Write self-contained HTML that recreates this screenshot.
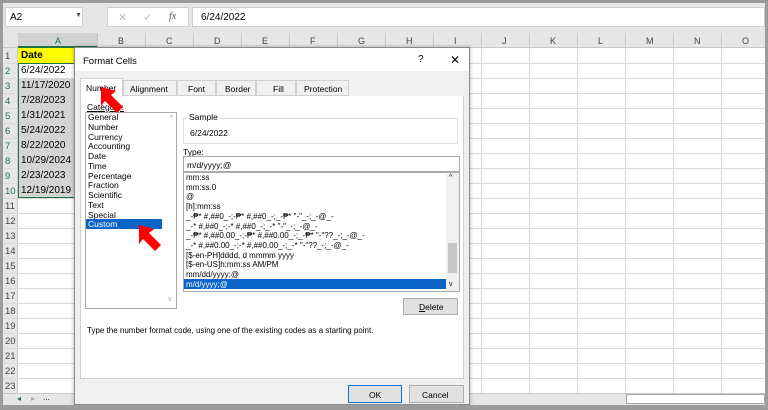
<!DOCTYPE html>
<html><head><style>
*{box-sizing:border-box;margin:0;padding:0}
body{width:768px;height:410px;overflow:hidden;background:#9b9b9b;font-family:"Liberation Sans",sans-serif;position:relative}
.a{position:absolute}
.t{font-size:9px;color:#000;white-space:nowrap}
</style></head><body>
<div class="a" style="left:3px;top:3px;width:762px;height:402px;background:#fff;overflow:hidden">
<div class="a" style="left:0;top:0;width:762px;height:30px;background:#e6e6e6"></div>
<div class="a" style="left:2px;top:4px;width:78px;height:20px;background:#fff;border:1px solid #d0d0d0"></div>
<div class="a t" style="left:7px;top:9px;font-size:10px">A2</div>
<div class="a t" style="left:72px;top:9px;font-size:7px;color:#555">▼</div>
<div class="a" style="left:104px;top:4px;width:82px;height:20px;background:#fff;border:1px solid #d0d0d0"></div>
<div class="a t" style="left:115px;top:8px;font-size:11px;color:#bbb">✕</div>
<div class="a t" style="left:140px;top:8px;font-size:11px;color:#bbb">✓</div>
<div class="a t" style="left:166px;top:8px;font-size:10px;color:#555;font-style:italic;font-family:'Liberation Serif',serif">fx</div>
<div class="a" style="left:189px;top:4px;width:573px;height:20px;background:#fff;border:1px solid #d0d0d0"></div>
<div class="a t" style="left:198px;top:9px;font-size:10px">6/24/2022</div>
<div class="a" style="left:0;top:30px;width:762px;height:15px;background:#e6e6e6;border-bottom:1px solid #c8c8c8"></div>
<div class="a" style="left:15px;top:30px;width:79px;height:15px;background:#d2d2d2;border-bottom:2px solid #217346"></div>
<div class="a t" style="left:52px;top:33px;color:#217346">A</div>
<div id="cols"></div>
<div class="a" style="left:0;top:45px;width:15px;height:345px;background:#e6e6e6;border-right:1px solid #c8c8c8"></div>
<div id="rows"></div>
<div class="a" style="left:15px;top:45px;width:79px;height:15px;background:#ffff00"></div>
<div class="a t" style="left:18px;top:47px;font-size:10px;font-weight:bold">Date</div>
<div class="a" style="left:15px;top:60px;width:79px;height:135px;background:#d4d4d4;border:1.5px solid #217346"></div>
<div class="a" style="left:16px;top:61px;width:77px;height:14px;background:#fff"></div>
<div id="dates"></div>
<div class="a" style="left:0;top:390px;width:762px;height:12px;background:#e6e6e6;border-top:1px solid #c8c8c8"></div>
<div class="a t" style="left:14px;top:391px;font-size:8px;color:#217346">◂</div>
<div class="a t" style="left:28px;top:391px;font-size:8px;color:#aaa">▸</div>
<div class="a t" style="left:40px;top:390px;font-size:8px">...</div>
<div class="a" style="left:623px;top:391px;width:139px;height:10px;background:#fff;border:1px solid #aaa"></div>
<div class="a" style="left:71px;top:44px;width:396px;height:358px;background:#f0f0f0;border:1px solid #8a8a8a;box-shadow:0 0 4px rgba(0,0,0,.3)">
 <div class="a" style="left:0;top:0;width:394px;height:23px;background:#fff"></div>
 <div class="a t" style="left:8px;top:8px;font-size:9.5px">Format Cells</div>
 <div class="a t" style="left:343px;top:6px;font-size:10px">?</div>
 <div class="a t" style="left:375px;top:5px;font-size:12px">✕</div>
 <div class="a" style="left:5px;top:30px;width:43px;height:19px;background:#fff;border:1px solid #d0d0d0;border-bottom:none"></div>
 <div class="a t" style="left:11px;top:35px;font-size:8.5px">Number</div>
 <div class="a" style="left:48px;top:32px;width:54px;height:16px;border:1px solid #d0d0d0"></div><div class="a t" style="left:55px;top:36px;font-size:8.5px">Alignment</div>
 <div class="a" style="left:102px;top:32px;width:39px;height:16px;border:1px solid #d0d0d0"></div><div class="a t" style="left:113px;top:36px;font-size:8.5px">Font</div>
 <div class="a" style="left:141px;top:32px;width:40px;height:16px;border:1px solid #d0d0d0"></div><div class="a t" style="left:150px;top:36px;font-size:8.5px">Border</div>
 <div class="a" style="left:181px;top:32px;width:40px;height:16px;border:1px solid #d0d0d0"></div><div class="a t" style="left:198px;top:36px;font-size:8.5px">Fill</div>
 <div class="a" style="left:221px;top:32px;width:53px;height:16px;border:1px solid #d0d0d0"></div><div class="a t" style="left:229px;top:36px;font-size:8.5px">Protection</div>
 <div class="a" style="left:5px;top:48px;width:384px;height:283px;background:#fff;border:1px solid #d0d0d0;border-top:none"></div>
 <div class="a t" style="left:12px;top:54px;font-size:8.5px;text-decoration:underline">Category:</div>
 <div class="a" style="left:10px;top:64px;width:92px;height:197px;background:#fff;border:1px solid #aaa"></div>
 <div class="a t" style="left:95px;top:67px;font-size:7px;color:#aaa">^</div>
 <div class="a t" style="left:93px;top:248px;font-size:7px;color:#aaa">v</div>
 <div class="a" style="left:11px;top:171px;width:76px;height:10px;background:#0a64c8"></div>
 <div class="a t" style="left:13px;top:65px;font-size:8.5px;line-height:9.75px">General<br>Number<br>Currency<br>Accounting<br>Date<br>Time<br>Percentage<br>Fraction<br>Scientific<br>Text<br>Special<br><span style="color:#fff">Custom</span></div>
 <div class="a" style="left:108px;top:70px;width:275px;height:26px;border:1px solid #ddd"></div>
 <div class="a t" style="left:112px;top:64px;font-size:8.5px;background:#fff;padding:0 2px">Sample</div>
 <div class="a t" style="left:115px;top:80px;font-size:8.5px">6/24/2022</div>
 <div class="a t" style="left:108px;top:99px;font-size:8.5px;text-decoration:underline">Type:</div>
 <div class="a" style="left:108px;top:108px;width:277px;height:16px;border:1px solid #aaa"></div>
 <div class="a t" style="left:112px;top:112px;font-size:8.5px">m/d/yyyy;@</div>
 <div class="a" style="left:108px;top:124px;width:277px;height:120px;border:1px solid #aaa;background:#fff"></div>
 <div class="a" style="left:371px;top:125px;width:13px;height:118px;background:#f0f0f0"></div>
 <div class="a" style="left:373px;top:195px;width:9px;height:30px;background:#c8c8c8"></div>
 <div class="a t" style="left:374px;top:126px;font-size:7px">^</div>
 <div class="a t" style="left:374px;top:233px;font-size:7px">v</div>
 <div class="a" style="left:109px;top:231px;width:262px;height:10px;background:#0a64c8"></div>
 <div class="a t" style="left:111px;top:125px;font-size:8px;line-height:9.7px">mm:ss<br>mm:ss.0<br>@<br>[h]:mm:ss<br>_-₱* #,##0_-;-₱* #,##0_-;_-₱* "-"_-;_-@_-<br>_-* #,##0_-;-* #,##0_-;_-* "-"_-;_-@_-<br>_-₱* #,##0.00_-;-₱* #,##0.00_-;_-₱* "-"??_-;_-@_-<br>_-* #,##0.00_-;-* #,##0.00_-;_-* "-"??_-;_-@_-<br>[$-en-PH]dddd, d mmmm yyyy<br>[$-en-US]h:mm:ss AM/PM<br>mm/dd/yyyy;@<br><span style="color:#fff">m/d/yyyy;@</span></div>
 <div class="a" style="left:328px;top:250px;width:55px;height:17px;background:#e1e1e1;border:1px solid #adadad"></div>
 <div class="a t" style="left:344px;top:254px;font-size:8.5px"><u>D</u>elete</div>
 <div class="a t" style="left:12px;top:278px;font-size:8px">Type the number format code, using one of the existing codes as a starting point.</div>
 <div class="a" style="left:273px;top:337px;width:54px;height:18px;background:#e1e1e1;border:1.5px solid #0078d7"></div>
 <div class="a t" style="left:294px;top:342px;font-size:8.5px">OK</div>
 <div class="a" style="left:334px;top:337px;width:55px;height:18px;background:#e1e1e1;border:1px solid #adadad"></div>
 <div class="a t" style="left:347px;top:342px;font-size:8.5px">Cancel</div>
</div>
<svg class="a" style="left:0;top:0" width="762" height="402">
 <g fill="#f00"><polygon points="98,84 113,88 108,92 120,104 114,110 102,98 98,103"/>
 <polygon points="136,222 151,226 146,230 158,242 152,248 140,236 136,241"/></g>
</svg>
</div>
<script>
var c='',L='BCDEFGHIJKLMNO';for(var i=0;i<14;i++){var x=94+i*48;c+='<div class="a" style="left:'+x+'px;top:30px;width:48px;height:15px;border-left:1px solid #c8c8c8"></div><div class="a t" style="left:'+(x+21)+'px;top:33px;color:#444">'+L[i]+'</div><div class="a" style="left:'+x+'px;top:45px;width:1px;height:345px;background:#dadada"></div>';}
document.getElementById('cols').innerHTML=c;
var r='';for(var j=0;j<23;j++){var y=45+j*15;r+='<div class="a" style="left:0;top:'+(y+15)+'px;width:762px;height:1px;background:#dadada"></div><div class="a t" style="left:2px;top:'+(y+3)+'px;font-size:9.5px;color:'+(j>0&&j<10?'#217346':'#444')+'">'+(j+1)+'</div>';}
document.getElementById('rows').innerHTML=r;
var d=['6/24/2022','11/17/2020','7/28/2023','1/31/2021','5/24/2022','8/22/2020','10/29/2024','2/23/2023','12/19/2019'],s='';
for(var k=0;k<9;k++)s+='<div class="a t" style="left:18px;top:'+(62+k*15)+'px;font-size:10px">'+d[k]+'</div>';
document.getElementById('dates').innerHTML=s;
</script>
</body></html>
